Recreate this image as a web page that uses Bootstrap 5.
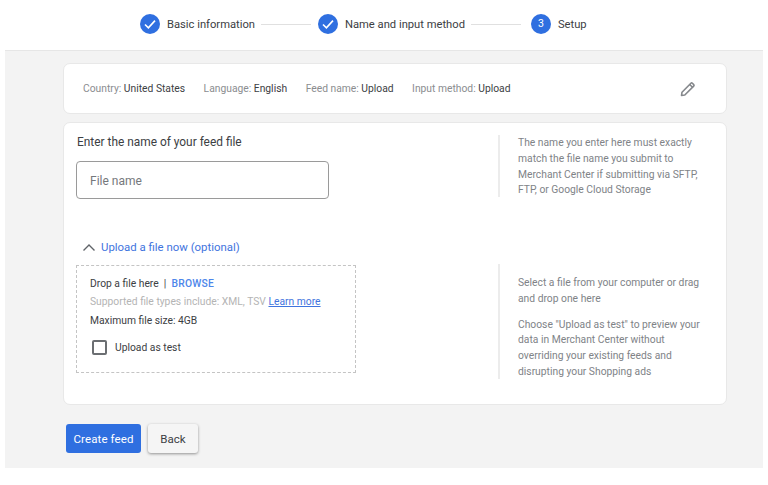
<!DOCTYPE html>
<html lang="en">
<head>
<meta charset="utf-8">
<title>Setup</title>
<link href="https://cdn.jsdelivr.net/npm/bootstrap@5.3.0/dist/css/bootstrap.min.css" rel="stylesheet">
<style>
html,body{height:485px;overflow:hidden;background:#fff}
body{font-family:Roboto,"Liberation Sans",sans-serif;font-size:11px;color:#3c4043}
.stepper{height:50px;padding-left:140px;padding-bottom:2px;align-items:center}
.step-dot{width:20px;height:20px;border-radius:50%;background:#2f6fe0;color:#fff;font-size:10.500px;flex:none}
.step-label{font-size:11.200px;font-weight:400;color:#3c4043;margin:2px 0 0 7px;line-height:20px;white-space:nowrap}
.step-line{height:1px;width:50px;background:#e0e0e0;margin:0 7px 0 6px;flex:none}
.step-line.wide-gap{margin-right:10px}
.panel-gray{margin:0 5px;height:418px;background:#f3f3f3;border-top:1px solid #e6e6e6;padding:12px 36px 0 58px}
.box{background:#fff;border:1px solid #e8e8e8;border-radius:7px}
.summary{height:51px;padding:0 30px 0 19px;margin-bottom:8px}
.summary span.kv{margin-right:18.500px;font-size:10.300px;color:#3c4043;white-space:nowrap}
.summary em{font-style:normal;color:#8b8d90}
.main-box{height:283px;padding:11px 13px 0 12px}
.left-col{width:422px;flex:none}
.right-col{border-left:2px solid #ececec;padding-left:18px;font-size:10.300px;line-height:15.800px;color:#808387;width:210px}
.right-col p{margin:0 0 10px}
.top-row{height:104px}
.top-row .right-col{height:62px;margin-top:1px}
.bottom-row .right-col{height:115px;margin-top:26px;padding-top:11px}
.heading{font-size:11.900px;line-height:16px;color:#3c4043;margin-bottom:11px;padding-left:1px}
.name-field{width:253px;height:38px;border:1px solid #9a9a9a;border-radius:4px;font-size:12px;padding:1px 13px 0;color:#5f6368;box-shadow:none;font-family:Roboto,sans-serif}
.name-field::placeholder{color:#75787c;opacity:1}
.toggle{color:#3f74de;font-size:11.400px;line-height:16px;height:16px;margin:1px 0 10px;padding-left:6px}
.toggle svg{margin-right:5px}
.drop{width:280px;height:108px;border:1px dashed #c4c4c4;padding:9px 13px 0;font-size:10.300px;line-height:18.400px;color:#3c4043}
.drop a{color:#3f74de;text-decoration:none}
.drop a.lm{text-decoration:underline}
.browse{color:#4d86ea!important;font-weight:500;letter-spacing:.25px}
.hint{color:#b4b4b4}
.fake-check{width:15px;height:15px;border:2px solid #6b6e72;border-radius:2px;margin:10px 0 0 2px;background:#fff;flex:none}
.check-text{margin:10px 0 0 8px;line-height:15px}
.actions{padding:19px 0 0 3px;gap:7px}
.btn-create{background:#2f6fe0;border:0;color:#fff;width:75px;height:29px;padding:2px 0 0;font-size:11.500px;border-radius:3px;letter-spacing:.1px}
.btn-create:hover{background:#2f6fe0;color:#fff}
.btn-back{background:#f5f5f5;border:0;color:#3c4043;width:50px;height:29px;padding:2px 0 0;font-size:11.500px;border-radius:3px;box-shadow:0 1px 3px rgba(0,0,0,.4)}
.btn-back:hover{background:#f5f5f5}
</style>
</head>
<body>
<div class="stepper d-flex">
  <span class="step-dot d-flex align-items-center justify-content-center"><svg width="14" height="14" viewBox="0 0 14 14"><path d="M2 7.500l3.400 3.400L12 3.600" fill="none" stroke="#fff" stroke-width="1.600"/></svg></span>
  <span class="step-label">Basic information</span>
  <span class="step-line"></span>
  <span class="step-dot d-flex align-items-center justify-content-center"><svg width="14" height="14" viewBox="0 0 14 14"><path d="M2 7.500l3.400 3.400L12 3.600" fill="none" stroke="#fff" stroke-width="1.600"/></svg></span>
  <span class="step-label">Name and input method</span>
  <span class="step-line wide-gap"></span>
  <span class="step-dot d-flex align-items-center justify-content-center">3</span>
  <span class="step-label">Setup</span>
</div>
<div class="panel-gray">
  <div class="box summary d-flex align-items-center">
    <span class="kv"><em>Country:</em> United States</span>
    <span class="kv"><em>Language:</em> English</span>
    <span class="kv"><em>Feed name:</em> Upload</span>
    <span class="kv"><em>Input method:</em> Upload</span>
    <svg class="ms-auto" width="16" height="16" viewBox="0 0 16 16"><path d="M1.500 14.500l.5-3.300L10.900 2.300c.5-.5 1-.5 1.500 0l1.300 1.300c.5.5.5 1 0 1.500L4.800 14zM9.700 3.500l2.800 2.800" fill="none" stroke="#85888c" stroke-width="1.600" stroke-linejoin="round"/></svg>
  </div>
  <div class="box main-box">
    <div class="d-flex top-row">
      <div class="left-col">
        <div class="heading">Enter the name of your feed file</div>
        <input class="form-control name-field" type="text" placeholder="File name">
      </div>
      <div class="right-col">The name you enter here must exactly match the file name you submit to Merchant Center if submitting via SFTP, FTP, or Google Cloud Storage</div>
    </div>
    <div class="d-flex bottom-row">
      <div class="left-col">
        <div class="toggle d-flex align-items-center"><svg width="14" height="9" viewBox="0 0 14 9"><path d="M1.500 7.500L7 2l5.500 5.500" fill="none" stroke="#5f6368" stroke-width="1.400"/></svg>Upload a file now (optional)</div>
        <div class="drop">
          <div>Drop a file here &nbsp;|&nbsp; <a class="browse" href="#">BROWSE</a></div>
          <div class="hint">Supported file types include: XML, TSV <a class="lm" href="#">Learn more</a></div>
          <div>Maximum file size: 4GB</div>
          <div class="d-flex"><span class="fake-check"></span><span class="check-text">Upload as test</span></div>
        </div>
      </div>
      <div class="right-col">
        <p>Select a file from your computer or drag and drop one here</p>
        <p>Choose "Upload as test" to preview your data in Merchant Center without overriding your existing feeds and disrupting your Shopping ads</p>
      </div>
    </div>
  </div>
  <div class="actions d-flex">
    <button class="btn btn-create" type="button">Create feed</button>
    <button class="btn btn-back" type="button">Back</button>
  </div>
</div>
<script src="https://cdn.jsdelivr.net/npm/bootstrap@5.3.0/dist/js/bootstrap.bundle.min.js"></script>
</body>
</html>
